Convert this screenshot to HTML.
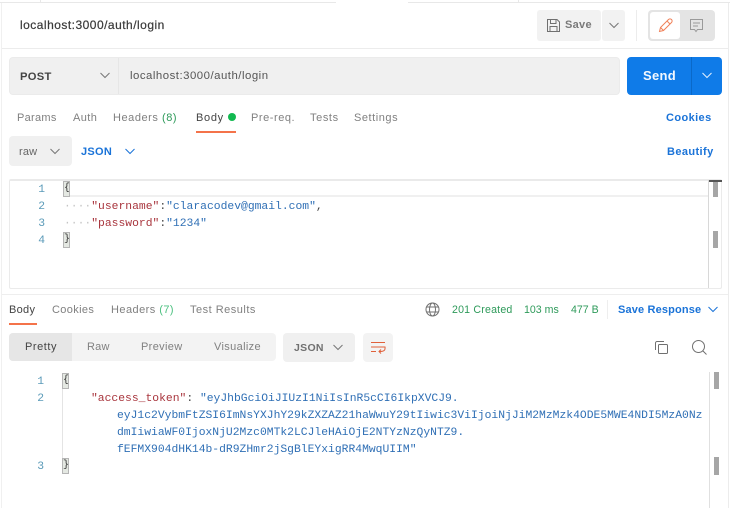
<!DOCTYPE html>
<html><head><meta charset="utf-8">
<style>
html,body{margin:0;padding:0;background:#fff}
#p{position:relative;width:730px;height:508px;overflow:hidden;background:#fff;font-family:"Liberation Sans",sans-serif;font-size:11px;color:#6b6b6b;filter:blur(.3px)}
#p div,#p span.a,#p svg{position:absolute}
.t{white-space:nowrap;line-height:14px}
.m{font-family:"Liberation Mono",monospace;font-size:11.35px;white-space:pre;line-height:17px}
.n{color:#5a9ab8;width:14px;text-align:right}
.k{color:#a8343c}.s{color:#2f6fb5}.d{color:#c4c4c4}.c{color:#444}
.b{color:#1a73d8;font-weight:bold}
.fold{background:#e4e8e2;border:1px solid #b5b5b5;box-sizing:border-box;width:7px;height:16px;color:#333;font:10px/14px "Liberation Mono",monospace;text-align:center;overflow:hidden}
</style></head><body><div id="p">
<div style="left:0;top:2px;width:336px;height:1px;background:#e8e8e8"></div>
<div style="left:408px;top:2px;width:322px;height:1px;background:#e8e8e8"></div>
<div style="left:40px;top:0;width:1px;height:3px;background:#e8e8e8"></div>
<div style="left:518px;top:0;width:1px;height:3px;background:#e8e8e8"></div>
<div style="left:1px;top:3px;width:1px;height:505px;background:#f0f0f0"></div>
<div style="left:728px;top:3px;width:1px;height:505px;background:#ececec"></div>
<div style="left:2px;top:48px;width:726px;height:1px;background:#ececec"></div>

<div class="t" style="left:20px;top:18px;font-size:12px;color:#3a3a3a;letter-spacing:.48px;-webkit-text-stroke:.2px #3a3a3a">localhost:3000/auth/login</div>

<div style="left:537px;top:10px;width:64px;height:31px;background:#f2f2f2;border-radius:3px"></div>
<div style="left:602px;top:10px;width:23px;height:31px;background:#f2f2f2;border-radius:3px"></div>
<svg style="left:546px;top:18px" width="15" height="15" viewBox="0 0 15 15" fill="none" stroke="#707070" stroke-width="1"><path d="M1.5 1.5H11L13.500 4V13.500H1.500Z"/><path d="M4.500 1.500V5.500H10V1.500M4 13.500V8.500H11V13.500"/></svg>
<div class="t" style="left:565px;top:18px;font-size:11px;font-weight:bold;color:#7a7a7a;letter-spacing:.3px">Save</div>
<svg style="left:608px;top:22px" width="12" height="7" fill="none" stroke="#777"><path d="M1.500 1l4.500 4.500L10.500 1"/></svg>
<div style="left:636px;top:10px;width:1px;height:31px;background:#ececec"></div>
<div style="left:648px;top:10px;width:67px;height:31px;background:#e4e4e4;border-radius:4px"></div>
<div style="left:650px;top:12px;width:30px;height:27px;background:#fff;border-radius:3px"></div>
<svg style="left:658px;top:18px" width="15" height="15" fill="none" stroke="#f08058" stroke-width="1"><path d="M1.500 13.500L2.500 9.500L10.500 1.500A1.400 1.400 0 0 1 13.500 4.500L5.500 12.500ZM9 3L12 6M2.500 9.500L5.500 12.500"/></svg>
<svg style="left:689px;top:18px" width="15" height="15" fill="none" stroke="#9a9a9a" stroke-width="1"><path d="M1.500 1.500H13.500V11.500H8.500L7 13.500L5.500 11.500H1.500Z"/><path d="M4 5H11M4 8H9"/></svg>

<div style="left:9px;top:57px;width:611px;height:38px;background:#f0f0f0;border:1px solid #ebebeb;box-sizing:border-box;border-radius:4px"></div>
<div style="left:118px;top:58px;width:1px;height:36px;background:#e6e6e6"></div>
<div class="t" style="left:20px;top:70px;font-size:11.2px;font-weight:bold;color:#444;letter-spacing:.3px">POST</div>
<svg style="left:99px;top:72px" width="12" height="7" fill="none" stroke="#777"><path d="M1.500 1l4.500 4.500L10.500 1"/></svg>
<div class="t" style="left:130px;top:69px;font-size:11.4px;color:#555;letter-spacing:.5px">localhost:3000/auth/login</div>

<div style="left:627px;top:57px;width:95px;height:38px;background:#0f7be8;border-radius:4px"></div>
<div style="left:691px;top:57px;width:1px;height:38px;background:#0a69c9"></div>
<div class="t" style="left:643px;top:69px;font-size:13px;font-weight:bold;color:#f2f8ff;letter-spacing:.3px">Send</div>
<svg style="left:701px;top:72px" width="12" height="7" fill="none" stroke="#e4f0ff"><path d="M1.500 1l4.500 4.500L10.500 1"/></svg>

<div class="t" style="left:17px;top:111px;color:#808080;letter-spacing:.3px">Params</div>
<div class="t" style="left:73px;top:111px;color:#808080;letter-spacing:.4px">Auth</div>
<div class="t" style="left:113px;top:111px;color:#808080;letter-spacing:.55px">Headers <span style="color:#2e9a5a">(8)</span></div>
<div class="t" style="left:196px;top:111px;color:#444;letter-spacing:.7px">Body</div>
<div style="left:228px;top:113px;width:8px;height:8px;background:#12b950;border-radius:50%"></div>
<div style="left:196px;top:131px;width:40px;height:2px;background:#f4734a"></div>
<div class="t" style="left:251px;top:111px;color:#808080;letter-spacing:.55px">Pre-req.</div>
<div class="t" style="left:310px;top:111px;color:#808080;letter-spacing:.6px">Tests</div>
<div class="t" style="left:354px;top:111px;color:#808080;letter-spacing:.55px">Settings</div>
<div class="t b" style="left:666px;top:111px;letter-spacing:.4px">Cookies</div>

<div style="left:9px;top:136px;width:63px;height:30px;background:#f0f0f0;border-radius:4px"></div>
<div class="t" style="left:19px;top:145px;color:#666;letter-spacing:.2px">raw</div>
<svg style="left:49px;top:148px" width="12" height="7" fill="none" stroke="#777"><path d="M1.500 1l4.500 4.500L10.500 1"/></svg>
<div class="t b" style="left:81px;top:145px;letter-spacing:.3px">JSON</div>
<svg style="left:124px;top:148px" width="12" height="7" fill="none" stroke="#1a73d8"><path d="M1.500 1l4.500 4.500L10.500 1"/></svg>
<div class="t b" style="left:667px;top:145px;letter-spacing:.4px">Beautify</div>

<!-- request editor -->
<div style="left:9px;top:179px;width:713px;height:110px;border:1px solid #ebebeb;box-sizing:border-box;border-top:2px solid #eaeaea;border-radius:2px"></div>
<div style="left:64px;top:195px;width:644px;height:2px;background:#f0f0f0"></div>
<div style="left:63px;top:181px;width:1px;height:15px;background:#ddd"></div>
<div class="fold" style="left:63px;top:181px">{</div>
<div class="m n" style="left:31px;top:182px">1</div>
<div class="m n" style="left:31px;top:199px">2</div>
<div class="m n" style="left:31px;top:216px">3</div>
<div class="m n" style="left:31px;top:233px">4</div>
<div class="m c" style="left:64px;top:199px"><span class="d">····</span><span class="k">"username"</span>:<span class="s">"claracodev@gmail.com"</span>,</div>
<div class="m c" style="left:64px;top:216px"><span class="d">····</span><span class="k">"password"</span>:<span class="s">"1234"</span></div>
<div class="fold" style="left:63px;top:232px">}</div>
<div style="left:708px;top:180px;width:1px;height:108px;background:#d8d8d8"></div>
<div style="left:709px;top:180px;width:13px;height:2px;background:#555"></div>
<div style="left:713px;top:182px;width:5px;height:15px;background:#a6a6a6"></div>
<div style="left:713px;top:231px;width:5px;height:17px;background:#a6a6a6"></div>

<!-- response -->
<div style="left:2px;top:294px;width:726px;height:1px;background:#eeeeee"></div>
<div class="t" style="left:9px;top:303px;color:#444;letter-spacing:.3px">Body</div>
<div style="left:9px;top:323px;width:28px;height:2px;background:#f4734a"></div>
<div class="t" style="left:52px;top:303px;color:#808080;letter-spacing:.35px">Cookies</div>
<div class="t" style="left:111px;top:303px;color:#808080;letter-spacing:.45px">Headers <span style="color:#4cc080">(7)</span></div>
<div class="t" style="left:190px;top:303px;color:#808080;letter-spacing:.5px">Test Results</div>

<svg style="left:425px;top:302px" width="15" height="15" fill="none" stroke="#707070" stroke-width="1"><circle cx="7.500" cy="7.500" r="6.500"/><ellipse cx="7.500" cy="7.500" rx="3" ry="6.500"/><path d="M1.500 5H13.500M1.500 10H13.500"/></svg>
<div class="t" style="left:452px;top:303px;color:#2e9a5a;font-size:10.6px;letter-spacing:.2px">201 Created</div>
<div class="t" style="left:524px;top:303px;color:#2e9a5a;font-size:10.6px">103 ms</div>
<div class="t" style="left:571px;top:303px;color:#2e9a5a;font-size:10.6px">477 B</div>
<div style="left:607px;top:300px;width:1px;height:19px;background:#eeeeee"></div>
<div class="t b" style="left:618px;top:303px;letter-spacing:.15px">Save Response</div>
<svg style="left:707px;top:306px" width="12" height="7" fill="none" stroke="#1a73d8"><path d="M1.500 1l4.500 4.500L10.500 1"/></svg>

<div style="left:9px;top:333px;width:267px;height:28px;background:#f3f3f3;border-radius:4px"></div>
<div style="left:9px;top:333px;width:63px;height:28px;background:#e6e6e6;border-radius:4px 0 0 4px"></div>
<div class="t" style="left:25px;top:340px;color:#444;letter-spacing:.55px">Pretty</div>
<div class="t" style="left:87px;top:340px;color:#808080;letter-spacing:.2px">Raw</div>
<div class="t" style="left:141px;top:340px;color:#808080;letter-spacing:.35px">Preview</div>
<div class="t" style="left:214px;top:340px;color:#808080;letter-spacing:.35px">Visualize</div>
<div style="left:283px;top:333px;width:72px;height:29px;background:#f0f0f0;border-radius:4px"></div>
<div class="t" style="left:294px;top:341px;font-size:10.500px;font-weight:bold;color:#707070;letter-spacing:.3px">JSON</div>
<svg style="left:332px;top:344px" width="12" height="7" fill="none" stroke="#777"><path d="M1.500 1l4.500 4.500L10.500 1"/></svg>
<div style="left:363px;top:333px;width:30px;height:29px;background:#f3f3f3;border-radius:4px"></div>
<svg style="left:370px;top:341px" width="16" height="14" fill="none" stroke="#e0603a" stroke-width="1"><path d="M1 1.500H15M1 6H15C15.500 9.500 14 10.500 9 10.500M11 8.500L9 10.500L11 12.500M1 10.500H6"/></svg>
<svg style="left:654px;top:340px" width="15" height="15" fill="none" stroke="#707070" stroke-width="1"><rect x="4.500" y="4.500" width="9" height="9" rx="1"/><path d="M1.500 10V3A1.500 1.500 0 0 1 3 1.500H10"/></svg>
<svg style="left:691px;top:339px" width="17" height="17" fill="none" stroke="#707070" stroke-width="1"><circle cx="7.500" cy="7.500" r="6"/><path d="M12 12L15.500 15.500"/></svg>

<div style="left:62px;top:373px;width:1px;height:100px;background:#e4e4e4"></div>
<div class="fold" style="left:62px;top:373px">{</div>
<div class="m n" style="left:30px;top:374px">1</div>
<div class="m n" style="left:30px;top:391px">2</div>
<div class="m n" style="left:30px;top:459px">3</div>
<div class="m c" style="left:91px;top:391px"><span class="k">"access_token"</span>: <span class="s">"eyJhbGciOiJIUzI1NiIsInR5cCI6IkpXVCJ9.</span></div>
<div class="m s" style="left:117px;top:408px">eyJ1c2VybmFtZSI6ImNsYXJhY29kZXZAZ21haWwuY29tIiwic3ViIjoiNjJiM2MzMzk4ODE5MWE4NDI5MzA0Nz</div>
<div class="m s" style="left:117px;top:425px">dmIiwiaWF0IjoxNjU2Mzc0MTk2LCJleHAiOjE2NTYzNzQyNTZ9.</div>
<div class="m s" style="left:117px;top:442px">fEFMX904dHK14b-dR9ZHmr2jSgBlEYxigRR4MwqUIIM"</div>
<div class="fold" style="left:62px;top:458px">}</div>
<div style="left:709px;top:372px;width:1px;height:136px;background:#e0e0e0"></div>
<div style="left:714px;top:372px;width:5px;height:17px;background:#a6a6a6"></div>
<div style="left:714px;top:457px;width:5px;height:18px;background:#a6a6a6"></div>
</div></body></html>
